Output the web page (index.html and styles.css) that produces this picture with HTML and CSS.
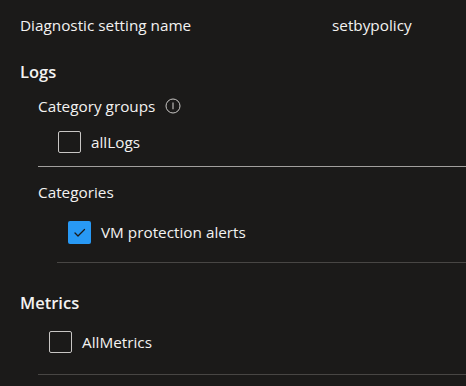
FILE: index.html
```html
<!DOCTYPE html>
<html>
<head>
<meta charset="utf-8">
<link rel="stylesheet" href="styles.css">
</head>
<body>
<div class="page">
  <div class="name-row">
    <span class="name-label">Diagnostic setting name</span>
    <span class="name-value">setbypolicy</span>
  </div>
  <div class="heading h-logs">Logs</div>
  <div class="sub-label group-label">Category groups
    <svg class="info" width="16" height="16" viewBox="0 0 16 16"><circle cx="8" cy="8" r="7" fill="none" stroke="#c8c6c4" stroke-width="1"/><line x1="8" y1="4.5" x2="8" y2="11.2" stroke="#c8c6c4" stroke-width="1.1"/></svg>
  </div>
  <div class="check-row row-alllogs">
    <span class="box"></span><span class="check-text">allLogs</span>
  </div>
  <div class="divider light"></div>
  <div class="sub-label cat-label">Categories</div>
  <div class="check-row row-vm">
    <span class="box checked"><svg width="23" height="23" viewBox="0 0 23 23"><path d="M7 12 L10 15 L16.5 8.5" fill="none" stroke="#1b1a19" stroke-width="1.3" stroke-linecap="round" stroke-linejoin="round"/></svg></span><span class="check-text">VM protection alerts</span>
  </div>
  <div class="divider dark div-vm"></div>
  <div class="heading h-metrics">Metrics</div>
  <div class="check-row row-metrics">
    <span class="box"></span><span class="check-text">AllMetrics</span>
  </div>
  <div class="divider dark div-metrics"></div>
</div>
</body>
</html>
```
FILE: styles.css
```css
html, body {
  margin: 0;
  padding: 0;
  background: #1b1a19;
}
body {
  width: 466px;
  height: 386px;
  overflow: hidden;
  font-family: "Open Sans", "Noto Sans", sans-serif;
  font-size: 15.3px;
  color: #f3f2f1;
}
.page {
  display: flex;
  flex-direction: column;
}
.name-row {
  height: 50px;
  display: flex;
  align-items: center;
  padding-left: 20px;
}
.name-label {
  width: 312px;
}
.heading {
  font-weight: 600;
  font-size: 16.5px;
  padding-left: 20px;
  display: flex;
  align-items: center;
}
.h-logs {
  height: 42px;
}
.sub-label {
  padding-left: 38px;
  display: flex;
  align-items: center;
}
.group-label {
  height: 28px;
}
.info {
  margin-left: 10px;
}
.check-row {
  display: flex;
  align-items: center;
}
.box {
  width: 21px;
  height: 20px;
  border: 1px solid #c8c6c4;
  border-radius: 2px;
  box-sizing: content-box;
  flex: none;
  display: flex;
}
.box.checked {
  width: 23px;
  height: 23px;
  border: none;
  background: #2899f5;
}
.check-text {
  margin-left: 10px;
}
.row-alllogs {
  height: 44px;
  padding-left: 58px;
}
.divider {
  height: 1px;
  flex: none;
}
.divider.light {
  margin-top: 2px;
  margin-left: 38px;
  background: #a19f9d;
}
.divider.dark {
  background: #484644;
}
.cat-label {
  height: 50px;
}
.row-vm {
  height: 30px;
  padding-left: 68px;
}
.div-vm {
  margin-top: 15px;
  margin-left: 57px;
}
.h-metrics {
  margin-top: 17px;
  height: 44px;
}
.row-metrics {
  height: 35px;
  padding-left: 49px;
}
.div-metrics {
  margin-top: 15px;
  margin-left: 38px;
}
```
